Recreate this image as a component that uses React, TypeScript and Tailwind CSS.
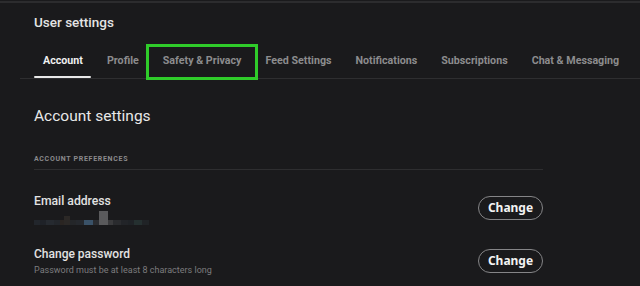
import React from "react";

const tabs = [
  "Account",
  "Profile",
  "Safety & Privacy",
  "Feed Settings",
  "Notifications",
  "Subscriptions",
  "Chat & Messaging",
];

const blur: { w: number; h: number; c: string }[] = [
  { w: 6, h: 5, c: "#22262c" },
  { w: 6, h: 5, c: "#1f2228" },
  { w: 8, h: 5, c: "#262a30" },
  { w: 6, h: 5, c: "#23262b" },
  { w: 4, h: 5, c: "#2a2522" },
  { w: 6, h: 9, c: "#2b2826" },
  { w: 6, h: 5, c: "#242629" },
  { w: 8, h: 5, c: "#25282d" },
  { w: 9, h: 5, c: "#3a5268" },
  { w: 6, h: 5, c: "#2a2c30" },
  { w: 9, h: 14, c: "#5a5a5c" },
  { w: 5, h: 5, c: "#3a3a3c" },
  { w: 8, h: 5, c: "#2a2b2e" },
  { w: 7, h: 5, c: "#222428" },
  { w: 6, h: 5, c: "#1f2226" },
  { w: 8, h: 5, c: "#253030" },
  { w: 7, h: 5, c: "#202326" },
];

export default function App() {
  return (
    <div
      className="w-[640px] h-[286px] overflow-hidden bg-[#1a1a1c] text-[#e6e6e6]"
      style={{ fontFamily: 'Roboto, "Noto Sans", sans-serif' }}
    >
      <div className="h-[2px] mt-px bg-[#2c2c2e]" />
      <div className="pl-[34px] pt-[9px] text-[13.5px] font-medium leading-[20px] text-[#e4e4e4]">
        User settings
      </div>
      <div className="ml-[20px] mt-[11px] flex border-b border-[#2e2e30] pl-[11px] whitespace-nowrap">
        {tabs.map((t, i) => (
          <div
            key={t}
            className={`relative flex shrink-0 h-[35px] items-center px-3 pt-[2px] text-[10.7px] font-bold ${
              i === 0 ? "text-[#f0f0f0]" : "text-[#8c8c8e]"
            }`}
          >
            {t}
            {i === 0 && (
              <div className="absolute bottom-0 left-[3px] right-[4px] h-[2px] rounded-full bg-[#e8e8e8]" />
            )}
            {i === 2 && (
              <div className="absolute -left-[5px] -right-[4px] top-[1px] bottom-[-2px] border-[3px] border-[#2fcc2a]" />
            )}
          </div>
        ))}
      </div>
      <div className="w-[509px] ml-[34px]">
        <div className="mt-[26px] text-[15.5px] leading-[22px] text-[#e8e8e8]">
          Account settings
        </div>
        <div className="mt-[27px] pb-[4px] border-b border-[#2e2e30] text-[7px] font-bold tracking-[0.1em] text-[#8a8a8c]">
          ACCOUNT PREFERENCES
        </div>
        <div className="mt-[22px] flex items-center justify-between">
          <div>
            <div className="text-[12.2px] leading-[18px] font-medium text-[#e2e2e2]">Email address</div>
            <div className="mt-[1px] flex items-end h-[14px]">
              {blur.map((b, i) => (
                <div key={i} style={{ width: b.w, height: b.h, background: b.c }} />
              ))}
            </div>
          </div>
          <button
            className="h-[24px] w-[65px] rounded-full border border-[#858587] text-[12px] font-bold text-[#f2f2f2]"
            style={{ fontFamily: '"Noto Sans", sans-serif' }}
          >
            Change
          </button>
        </div>
        <div className="mt-[20px] flex items-center justify-between">
          <div>
            <div className="text-[12px] leading-[18px] font-medium text-[#e2e2e2]">Change password</div>
            <div className="text-[9px] leading-[14px] text-[#7c7c7e]">
              Password must be at least 8 characters long
            </div>
          </div>
          <button
            className="h-[24px] w-[65px] rounded-full border border-[#858587] text-[12px] font-bold text-[#f2f2f2]"
            style={{ fontFamily: '"Noto Sans", sans-serif' }}
          >
            Change
          </button>
        </div>
      </div>
    </div>
  );
}
